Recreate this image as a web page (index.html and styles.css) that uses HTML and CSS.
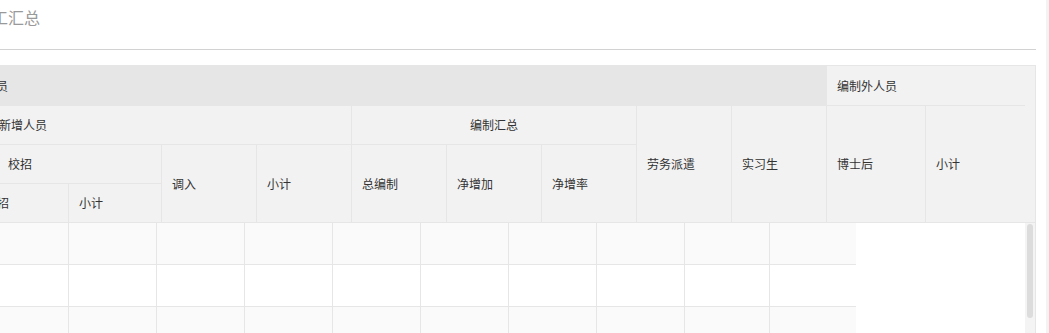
FILE: index.html
```html
<!DOCTYPE html>
<html lang="zh-CN">
<head>
    <meta charset="UTF-8">
    <meta name="viewport" content="width=device-width, initial-scale=1.0">
    <title>员工汇总</title>
    <link rel="stylesheet" href="styles.css">
</head>
<body>
    <div class="panel">
        <div class="panel-title">员工汇总</div>

        <div class="grid">
            <!-- 表头：与表体同步横向滚动 -->
            <div class="grid-head">
                <div class="grid-head-scroll">
                    <table class="head-table">
                        <colgroup>
                            <col class="w95"><col class="w94"><col class="w94">
                            <col class="w94"><col class="w94"><col class="w94">
                            <col class="w92"><col class="w92">
                            <col class="w96"><col class="w94"><col class="w93">
                            <col class="w95"><col class="w95">
                            <col class="w95"><col class="w95"><col class="w95">
                            <col class="w95"><col class="w95">
                            <col class="w99"><col class="w99">
                        </colgroup>
                        <tr class="row-top">
                            <th colspan="18" class="th-main center">编制内人员</th>
                            <th colspan="2" class="last">编制外人员</th>
                        </tr>
                        <tr>
                            <th colspan="6" class="center">原有人员</th>
                            <th colspan="7" class="center">新增人员</th>
                            <th colspan="3" class="center">编制汇总</th>
                            <th rowspan="3">劳务派遣</th>
                            <th rowspan="3">实习生</th>
                            <th rowspan="3">博士后</th>
                            <th rowspan="3" class="last">小计</th>
                        </tr>
                        <tr>
                            <th rowspan="2">期初编制</th>
                            <th rowspan="2">在岗</th>
                            <th rowspan="2">离岗</th>
                            <th rowspan="2">退休</th>
                            <th rowspan="2">调出</th>
                            <th rowspan="2">小计</th>
                            <th colspan="2" class="center">社招</th>
                            <th colspan="3" class="center">校招</th>
                            <th rowspan="2">调入</th>
                            <th rowspan="2">小计</th>
                            <th rowspan="2">总编制</th>
                            <th rowspan="2">净增加</th>
                            <th rowspan="2">净增率</th>
                        </tr>
                        <tr>
                            <th>引进</th>
                            <th>小计</th>
                            <th>春招</th>
                            <th>秋招</th>
                            <th>小计</th>
                        </tr>
                    </table>
                </div>
                <div class="grid-gutter"></div>
            </div>

            <div class="grid-body">
                <div class="grid-body-scroll">
                    <table class="body-table">
                        <colgroup>
                            <col class="w85"><col class="w85"><col class="w85"><col class="w85">
                            <col class="w85"><col class="w85"><col class="w85"><col class="w85">
                            <col class="w85"><col class="w85"><col class="w89">
                            <col class="w88"><col class="w88"><col class="w88"><col class="w88">
                            <col class="w88"><col class="w88"><col class="w88">
                            <col class="w85"><col class="w86">
                        </colgroup>
                        <tbody id="grid-rows"></tbody>
                    </table>
                </div>
                <div class="grid-track"><div class="grid-thumb"></div></div>
            </div>
        </div>
    </div>
    <div class="page-edge"></div>

    <script>
        // 空数据行，先占位
        const rows = document.getElementById('grid-rows');
        for (let r = 0; r < 5; r++) {
            const tr = document.createElement('tr');
            for (let c = 0; c < 20; c++) {
                tr.appendChild(document.createElement('td'));
            }
            rows.appendChild(tr);
        }
    </script>
</body>
</html>
```

FILE: styles.css
```css
html,
body {
    height: 100%;
}
body {
    margin: 0;
    display: flex;
    overflow: hidden;
    background: #fff;
    color: #333;
    font-family: "Noto Sans CJK SC", "Noto Sans", sans-serif;
}
.panel {
    flex: none;
    width: 1076px;
    margin-left: -40px;
    margin-right: 10px;
}
.panel-title {
    padding-left: 16px;
    padding-bottom: 15px;
    font-size: 16px;
    line-height: 34px;
    color: #999;
    border-bottom: 1px solid #d2d2d2;
}
.page-edge {
    flex: none;
    width: 3px;
    background: #f3f3f3;
}

.grid {
    margin-top: 15px;
    border: 1px solid #e6e6e6;
}
.grid-head {
    display: flex;
}
.grid-head-scroll {
    flex: 1;
    overflow: hidden;
}
.grid-gutter {
    flex: none;
    width: 10px;
    background: #f2f2f2;
    border-bottom: 1px solid #e6e6e6;
}
.grid-body {
    display: flex;
    height: 260px;
}
.grid-body-scroll {
    flex: 1;
    overflow: hidden;
}
.grid-track {
    flex: none;
    width: 10px;
    background: #f4f4f4;
}
.grid-thumb {
    margin: 1px 2px 0;
    height: 94px;
    border-radius: 3px;
    background: #dcdcdc;
}

table {
    table-layout: fixed;
    border-collapse: separate;
    border-spacing: 0;
}
.head-table {
    width: 1895px;
    margin-left: -831px;
}
.body-table {
    width: 1726px;
    margin-left: -831px;
}
.head-table th {
    padding: 0 10px;
    font-size: 12px;
    font-weight: normal;
    line-height: 38px;
    text-align: left;
    white-space: nowrap;
    overflow: hidden;
    background: #f2f2f2;
    border-right: 1px solid #e6e6e6;
    border-bottom: 1px solid #e6e6e6;
}
.head-table .row-top th {
    line-height: 39px;
}
.head-table th.center {
    text-align: center;
}
.head-table th.th-main {
    background: #e6e6e6;
}
.head-table th.last {
    border-right: none;
}
.body-table td {
    height: 41px;
    padding: 0;
    background: #fff;
    border-right: 1px solid #e6e6e6;
    border-bottom: 1px solid #e6e6e6;
}
.body-table td:last-child {
    border-right: none;
}
.body-table tr:nth-child(odd) td {
    background: #fafafa;
}

.w85 { width: 85px; }
.w86 { width: 86px; }
.w88 { width: 88px; }
.w89 { width: 89px; }
.w92 { width: 92px; }
.w93 { width: 93px; }
.w94 { width: 94px; }
.w95 { width: 95px; }
.w96 { width: 96px; }
.w99 { width: 99px; }
```
